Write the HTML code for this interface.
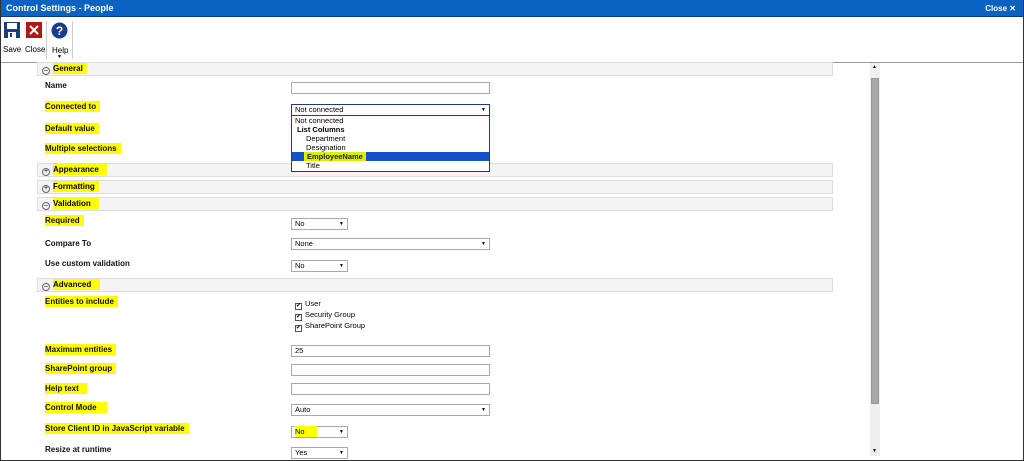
<!DOCTYPE html>
<html><head><style>
*{box-sizing:border-box;margin:0;padding:0}
body{width:1024px;height:461px;overflow:hidden;background:#fff;font-family:"Liberation Sans",sans-serif;font-size:8px;position:relative}
.frame{position:absolute;left:0;top:0;width:1024px;height:461px;border:1px solid #333;border-top:none}
.title{position:absolute;left:0;top:0;width:1024px;height:17px;background:#0b63c1;border-bottom:1px solid #063c80;color:#fff;font-weight:bold;font-size:9px;line-height:17px;padding-left:6px}
.close{position:absolute;right:8px;top:0;font-size:8px}
.tb{position:absolute;top:62px;left:1px;width:1022px;height:1px;background:#999}
.a{position:absolute}
.lbl{position:absolute;left:45px;font-weight:bold;color:#111;font-size:8px}
.hl{background:#ffff00;padding:1px 4px 1px 0}
.hdr{position:absolute;left:37px;width:796px;height:14px;background:#f4f4f4;border:1px solid #ddd;font-weight:bold;font-size:8px;line-height:12px;padding-left:4px}
.ic{display:inline-block;width:8px;height:8px;border:1px solid #666;border-radius:50%;font-size:7px;line-height:6px;text-align:center;margin-right:3px;font-weight:normal;vertical-align:-1px}
.in{position:absolute;left:291px;border:1px solid #aaa;height:12px;background:#fff;font-size:7.5px;line-height:10px;padding-left:3px}
.arr:after{content:"▼";position:absolute;right:3px;font-size:5px;top:0}
.cb{position:absolute;left:295px;font-size:7.5px}
.cb i{display:inline-block;width:7px;height:7px;border:1px solid #555;margin-right:3px;font-style:normal;font-size:6px;line-height:5px;vertical-align:-1px}
</style></head><body>
<div class="title">Control Settings - People<span class="close">Close ✕</span></div>
<svg class="a" style="left:4px;top:22px" width="16" height="16"><rect x="0" y="0" width="16" height="16" fill="#1c3f7a"/><rect x="3" y="1" width="10" height="6" fill="#fff"/><rect x="4" y="10" width="8" height="6" fill="#fff"/><rect x="6" y="11" width="2" height="4" fill="#1c3f7a"/></svg>
<svg class="a" style="left:26px;top:22px" width="16" height="16"><rect width="16" height="16" fill="#b01818"/><path d="M4 4L12 12M12 4L4 12" stroke="#fff" stroke-width="2"/></svg>
<div class="a" style="left:3px;top:45px;font-size:8px">Save</div>
<div class="a" style="left:25px;top:45px;font-size:8px">Close</div>
<div class="a" style="left:46px;top:21px;width:1px;height:38px;background:#ccc"></div>
<svg class="a" style="left:51px;top:22px" width="17" height="17"><circle cx="8.5" cy="8.5" r="8" fill="#1a3c8c"/><text x="8.5" y="13" fill="#fff" font-size="12" font-weight="bold" text-anchor="middle" font-family="Liberation Sans">?</text></svg>
<div class="a" style="left:52px;top:46px;font-size:8px">Help</div>
<div class="a" style="left:57px;top:54px;font-size:5px">▼</div>
<div class="a" style="left:72px;top:21px;width:1px;height:38px;background:#ccc"></div>
<div class="tb"></div>

<div class="hdr" style="top:62px"><span class="ic">–</span><span class="hl">General</span></div>
<div class="lbl" style="top:81px">Name</div>
<div class="in" style="top:82px;width:199px"></div>
<div class="lbl" style="top:102px"><span class="hl">Connected to</span></div>
<div class="lbl" style="top:124px"><span class="hl">Default value</span></div>
<div class="lbl" style="top:144px"><span class="hl">Multiple selections</span></div>

<div class="hdr" style="top:163px"><span class="ic">+</span><span class="hl">Appearance&nbsp;&nbsp;</span></div>
<div class="hdr" style="top:180px"><span class="ic">+</span><span class="hl">Formatting</span></div>
<div class="hdr" style="top:197px"><span class="ic">–</span><span class="hl">Validation&nbsp;&nbsp;</span></div>
<div class="lbl" style="top:216px"><span class="hl">Required</span></div>
<div class="in arr" style="top:218px;width:57px">No</div>
<div class="lbl" style="top:239px">Compare To</div>
<div class="in arr" style="top:238px;width:199px">None</div>
<div class="lbl" style="top:259px">Use custom validation</div>
<div class="in arr" style="top:260px;width:57px">No</div>

<div class="hdr" style="top:278px"><span class="ic">–</span><span class="hl">Advanced&nbsp;&nbsp;</span></div>
<div class="lbl" style="top:297px"><span class="hl">Entities to include</span></div>
<div class="cb" style="top:299px"><i>✔</i>User</div>
<div class="cb" style="top:310px"><i>✔</i>Security Group</div>
<div class="cb" style="top:321px"><i>✔</i>SharePoint Group</div>
<div class="lbl" style="top:345px"><span class="hl">Maximum entities</span></div>
<div class="in" style="top:345px;width:199px">25</div>
<div class="lbl" style="top:364px"><span class="hl">SharePoint group</span></div>
<div class="in" style="top:364px;width:199px"></div>
<div class="lbl" style="top:384px"><span class="hl">Help text&nbsp;&nbsp;</span></div>
<div class="in" style="top:383px;width:199px"></div>
<div class="lbl" style="top:403px"><span class="hl">Control Mode&nbsp;&nbsp;&nbsp;</span></div>
<div class="in arr" style="top:404px;width:199px">Auto</div>
<div class="lbl" style="top:424px"><span class="hl">Store Client ID in JavaScript variable</span></div>
<div class="in arr" style="top:426px;width:57px"><span class="hl" style="padding-right:12px">No</span></div>
<div class="lbl" style="top:445px">Resize at runtime</div>
<div class="in arr" style="top:447px;width:57px">Yes</div>

<div class="in arr" style="top:104px;width:199px;border-color:#1a3c8c">Not connected</div>
<div class="a" style="left:291px;top:116px;width:199px;height:56px;border:1px solid #1a3c8c;border-top:none;background:#fff;font-size:7.5px;line-height:9px;overflow:hidden">
<div style="padding-left:3px">Not connected</div>
<div style="padding-left:5px;font-weight:bold">List Columns</div>
<div style="padding-left:14px">Department</div>
<div style="padding-left:14px">Designation</div>
<div style="padding-left:12px;background:#1550c8;height:9px;line-height:9px"><span style="background:#d8f000;color:#222;font-weight:bold;padding:0 3px">EmployeeName</span></div>
<div style="padding-left:14px">Title</div>
</div>

<div class="a" style="left:870px;top:63px;width:10px;height:393px;background:#efefef"></div>
<div class="a" style="left:872px;top:64px;font-size:5px">▲</div>
<div class="a" style="left:871px;top:78px;width:8px;height:326px;background:#a8a8a8;border:1px solid #999"></div>
<div class="a" style="left:872px;top:448px;font-size:5px">▼</div>
<div class="frame"></div>
</body></html>
